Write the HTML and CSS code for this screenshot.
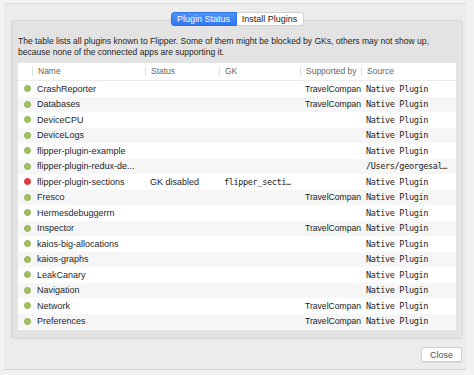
FILE: index.html
```html
<!DOCTYPE html>
<html lang="en">
<head>
    <meta charset="UTF-8">
    <meta name="viewport" content="width=device-width, initial-scale=1.0">
    <title>Plugin Status</title>
    <link rel="stylesheet" href="styles.css">
</head>
<body>
    <div class="window">
        <div class="tabs">
            <div class="tab active">Plugin Status</div>
            <div class="tab">Install Plugins</div>
        </div>

        <div class="group">
            <p class="intro">The table lists all plugins known to Flipper. Some of them might be blocked by GKs, others may not show up, because none of the connected apps are supporting it.</p>

            <div class="table">
                <div class="row head">
                    <div class="cell"></div>
                    <div class="cell sep">Name</div>
                    <div class="cell sep">Status</div>
                    <div class="cell sep">GK</div>
                    <div class="cell sep">Supported by</div>
                    <div class="cell sep">Source</div>
                </div>

                <div class="row"><div class="cell"><span class="dot"></span></div><div class="cell">CrashReporter</div><div class="cell"></div><div class="cell"></div><div class="cell app">TravelCompan</div><div class="cell mono">Native Plugin</div></div>
                <div class="row"><div class="cell"><span class="dot"></span></div><div class="cell">Databases</div><div class="cell"></div><div class="cell"></div><div class="cell app">TravelCompan</div><div class="cell mono">Native Plugin</div></div>
                <div class="row"><div class="cell"><span class="dot"></span></div><div class="cell">DeviceCPU</div><div class="cell"></div><div class="cell"></div><div class="cell app"></div><div class="cell mono">Native Plugin</div></div>
                <div class="row"><div class="cell"><span class="dot"></span></div><div class="cell">DeviceLogs</div><div class="cell"></div><div class="cell"></div><div class="cell app"></div><div class="cell mono">Native Plugin</div></div>
                <div class="row"><div class="cell"><span class="dot"></span></div><div class="cell">flipper-plugin-example</div><div class="cell"></div><div class="cell"></div><div class="cell app"></div><div class="cell mono">Native Plugin</div></div>
                <div class="row"><div class="cell"><span class="dot"></span></div><div class="cell">flipper-plugin-redux-de...</div><div class="cell"></div><div class="cell"></div><div class="cell app"></div><div class="cell mono">/Users/georgesal…</div></div>
                <div class="row"><div class="cell"><span class="dot off"></span></div><div class="cell">flipper-plugin-sections</div><div class="cell">GK disabled</div><div class="cell mono">flipper_secti…</div><div class="cell app"></div><div class="cell mono">Native Plugin</div></div>
                <div class="row"><div class="cell"><span class="dot"></span></div><div class="cell">Fresco</div><div class="cell"></div><div class="cell"></div><div class="cell app">TravelCompan</div><div class="cell mono">Native Plugin</div></div>
                <div class="row"><div class="cell"><span class="dot"></span></div><div class="cell">Hermesdebuggerrn</div><div class="cell"></div><div class="cell"></div><div class="cell app"></div><div class="cell mono">Native Plugin</div></div>
                <div class="row"><div class="cell"><span class="dot"></span></div><div class="cell">Inspector</div><div class="cell"></div><div class="cell"></div><div class="cell app">TravelCompan</div><div class="cell mono">Native Plugin</div></div>
                <div class="row"><div class="cell"><span class="dot"></span></div><div class="cell">kaios-big-allocations</div><div class="cell"></div><div class="cell"></div><div class="cell app"></div><div class="cell mono">Native Plugin</div></div>
                <div class="row"><div class="cell"><span class="dot"></span></div><div class="cell">kaios-graphs</div><div class="cell"></div><div class="cell"></div><div class="cell app"></div><div class="cell mono">Native Plugin</div></div>
                <div class="row"><div class="cell"><span class="dot"></span></div><div class="cell">LeakCanary</div><div class="cell"></div><div class="cell"></div><div class="cell app"></div><div class="cell mono">Native Plugin</div></div>
                <div class="row"><div class="cell"><span class="dot"></span></div><div class="cell">Navigation</div><div class="cell"></div><div class="cell"></div><div class="cell app"></div><div class="cell mono">Native Plugin</div></div>
                <div class="row"><div class="cell"><span class="dot"></span></div><div class="cell">Network</div><div class="cell"></div><div class="cell"></div><div class="cell app">TravelCompan</div><div class="cell mono">Native Plugin</div></div>
                <div class="row"><div class="cell"><span class="dot"></span></div><div class="cell">Preferences</div><div class="cell"></div><div class="cell"></div><div class="cell app">TravelCompan</div><div class="cell mono">Native Plugin</div></div>
            </div>
        </div>

        <div class="footer">
            <button class="close">Close</button>
        </div>
    </div>
</body>
</html>
```

FILE: styles.css
```css
/* General Styles */
body {
    margin: 0;
    background-color: #f2f2f2;
    font-family: "Liberation Sans", Arial, sans-serif;
    color: #262626;
}

.window {
    box-sizing: border-box;
    width: 462px;
    height: 367px;
    margin: 3px 0 0 4px;
    padding-top: 8px;
    background-color: #ececec;
    border-top: 1px solid #dcdcdc;
    border-bottom: 1px solid #d4d4d4;
}

/* Segmented tabs */
.tabs {
    position: relative;
    z-index: 1;
    display: flex;
    justify-content: center;
    margin: 0 0 -6px 4px;
}

.tab {
    box-sizing: border-box;
    width: 67px;
    height: 14px;
    line-height: 12px;
    font-size: 9px;
    text-align: center;
    white-space: nowrap;
    background-color: #fff;
    color: #222;
    border: 1px solid #d2d2d2;
    border-left: none;
    border-radius: 0 3px 3px 0;
}

.tab.active {
    width: 66px;
    background: linear-gradient(#4d93f7, #2f78ef);
    color: #fff;
    border: 1px solid #2e74e6;
    border-radius: 3px 0 0 3px;
}

/* Group box */
.group {
    box-sizing: border-box;
    height: 319px;
    margin: 0 3px 0 7px;
    padding: 15px 6px 8px 6px;
    background-color: #e3e3e3;
    border: 1px solid #d6d6d6;
    border-radius: 3px;
}

.intro {
    margin: 0 0 5px 0;
    font-size: 8.55px;
    line-height: 11px;
    color: #1e1e1e;
}

/* Table */
.table {
    background-color: #fff;
    height: 267px;
    overflow: hidden;
}

.row {
    display: grid;
    grid-template-columns: 14px 113px 74px 81px 61px 94px;
    height: 15.5px;
    align-items: center;
    font-size: 9px;
}

.row:nth-child(odd) {
    background-color: #f6f6f6;
}

.row.head {
    height: 17px;
    background-color: #fff;
    border-bottom: 1px solid #ececec;
    font-size: 8.5px;
    color: #666;
}

.cell {
    padding-left: 5px;
    white-space: nowrap;
    overflow: hidden;
}

.head .sep {
    border-left: 1px solid #dedede;
    line-height: 9px;
}

.row .cell:first-child {
    padding-left: 6px;
    display: flex;
}

.dot {
    width: 7px;
    height: 7px;
    border-radius: 50%;
    background-color: #a1c061;
    border: 0.5px solid #8fae52;
    box-sizing: border-box;
}

.dot.off {
    background-color: #e6393d;
    border-color: #cf2f33;
}

.app {
    font-size: 8.6px;
    color: #222;
}

.mono {
    font-family: "DejaVu Sans Mono", "Liberation Mono", monospace;
    font-size: 8.5px;
    letter-spacing: -0.35px;
    color: #222;
}

/* Footer */
.footer {
    display: flex;
    justify-content: flex-end;
    margin: 8px 4px 0 0;
}

.close {
    width: 41px;
    height: 15px;
    padding: 0;
    font-family: inherit;
    font-size: 9px;
    color: #555;
    background-color: #fff;
    border: 1px solid #d0d0d0;
    border-radius: 2px;
    box-shadow: 0 0.5px 1px rgba(0, 0, 0, 0.08);
}
```
